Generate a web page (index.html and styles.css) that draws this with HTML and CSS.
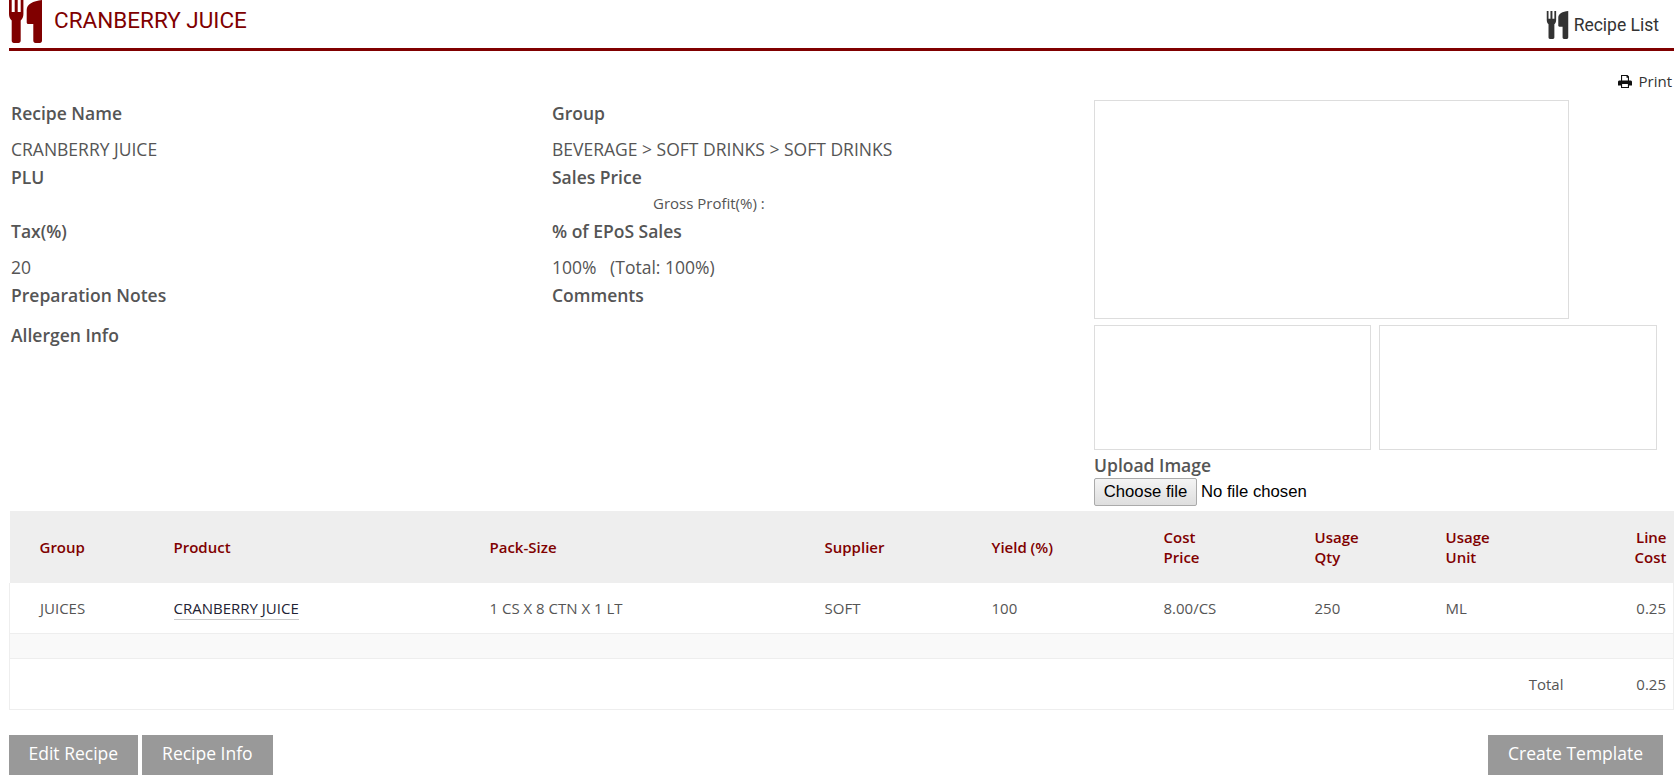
FILE: index.html
```html
<!DOCTYPE html>
<html lang="en">
<head>
<meta charset="utf-8">
<title>Cranberry Juice</title>
<link rel="stylesheet" href="styles.css">
</head>
<body>
<svg class="defs" aria-hidden="true"><symbol id="cutlery" viewBox="0 0 33 43"><path d="M0 0h2.700v12h3V0h3v12h3V0h2.700v14c0 3-1 5-2.700 6.500v20c0 1.500-.8 2.500-2.200 2.500H4.900c-1.400 0-2.200-1-2.200-2.500v-20C1 19 0 17 0 14z"/><path d="M33 0v40.500c0 1.500-.8 2.500-2.200 2.500h-4.300c-1.400 0-2.200-1-2.200-2.500V24h-4.800c-1.300 0-1.800-.7-1.800-1.800V10C17.700 4 24 1 33 0z"/></symbol></svg>
<header class="topbar">
  <div class="title">
    <svg class="cut-lg"><use href="#cutlery"/></svg>
    <h1>CRANBERRY JUICE</h1>
  </div>
  <a class="list-link"><svg class="cut-sm"><use href="#cutlery"/></svg>Recipe List</a>
</header>
<div class="print-row">
  <a class="print">
    <svg class="print-icon" viewBox="0 0 14 13"><path fill-rule="evenodd" d="M3 0h6.500L11 1.500V5.500H3zM4.100 1.100V5.500H9.900V2.700H8.500V1.100zM0 7C0 6 .7 5.500 1.500 5.500h11C13.300 5.500 14 6 14 7v3.500h-3V13H3v-2.500H0zM4.100 9v2.900h5.800V9z"/></svg>
    Print
  </a>
</div>
<section class="info">
  <div class="fields">
    <div class="field"><h4>Recipe Name</h4><p>CRANBERRY JUICE</p></div>
    <div class="field"><h4>Group</h4><p>BEVERAGE &gt; SOFT DRINKS &gt; SOFT DRINKS</p></div>
    <div class="field short"><h4>PLU</h4></div>
    <div class="field short"><h4>Sales Price</h4><small>Gross Profit(%) :</small></div>
    <div class="field"><h4>Tax(%)</h4><p>20</p></div>
    <div class="field"><h4>% of EPoS Sales</h4><p>100% &nbsp; (Total: 100%)</p></div>
    <div class="field notes"><h4>Preparation Notes</h4></div>
    <div class="field notes"><h4>Comments</h4></div>
    <div class="field"><h4>Allergen Info</h4></div>
  </div>
  <aside class="images">
    <div class="img-main"></div>
    <div class="thumbs"><div class="thumb"></div><div class="thumb"></div></div>
    <h4 class="upload-label">Upload Image</h4>
    <div class="upload"><button class="file-btn" type="button">Choose file</button><span>No file chosen</span></div>
  </aside>
</section>
<table class="lines">
  <thead>
    <tr>
      <th class="c1">Group</th><th class="c2">Product</th><th class="c3">Pack-Size</th><th class="c4">Supplier</th><th class="c5">Yield (%)</th><th class="c6">Cost<br>Price</th><th class="c7">Usage<br>Qty</th><th class="c8">Usage<br>Unit</th><th class="num">Line<br>Cost</th>
    </tr>
  </thead>
  <tbody>
    <tr class="row">
      <td>JUICES</td><td><a class="product">CRANBERRY JUICE</a></td><td>1 CS X 8 CTN X 1 LT</td><td>SOFT</td><td>100</td><td>8.00/CS</td><td>250</td><td>ML</td><td class="num">0.25</td>
    </tr>
    <tr class="spacer"><td colspan="9"></td></tr>
    <tr class="total">
      <td colspan="7"></td><td class="total-label">Total</td><td class="num">0.25</td>
    </tr>
  </tbody>
</table>
<footer class="actions">
  <div class="actions-left"><a class="btn">Edit Recipe</a><a class="btn btn-wide">Recipe Info</a></div>
  <a class="btn btn-create">Create Template</a>
</footer>
</body>
</html>
```
FILE: styles.css
```css
* { box-sizing: border-box; }
html, body { margin: 0; padding: 0; }
body { width: 1677px; height: 782px; overflow: hidden; padding: 0 3px 0 9px; font-family: "Open Sans", sans-serif; font-size: 17.5px; color: #555; background: #fff; }
.defs { display: none; }
.topbar { height: 51px; border-bottom: 3px solid #800000; display: flex; justify-content: space-between; align-items: flex-start; padding-right: 15px; }
.title { display: flex; align-items: flex-start; }
.cut-lg { width: 33px; height: 43px; fill: #800000; display: block; }
.title h1 { margin: 6px 0 0 12px; font: 400 22.5px/28px Roboto, sans-serif; color: #800000; }
.list-link { display: flex; align-items: center; margin-top: 11px; font: 400 17.5px/22px Roboto, sans-serif; color: #333; }
.cut-sm { width: 23px; height: 28px; fill: #333; margin-right: 5px; }
.print-row { display: flex; justify-content: flex-end; padding: 20px 2px 0 0; height: 48px; }
.print { display: flex; align-items: center; gap: 6px; height: 20px; font-size: 15px; color: #333; }
.print-icon { width: 14px; height: 13px; fill: #111; margin-right: 1px; }
.info { display: flex; height: 412px; }
.fields { width: 1085px; display: grid; grid-template-columns: 541px 544px; grid-template-rows: 64px 54px 64px 40px auto; align-content: start; padding-left: 2px; }
.field h4 { margin: 0; font-size: 17.5px; line-height: 28px; font-weight: 600; color: #555; }
.field p { margin: 11px 0 0; font-size: 17.5px; line-height: 22px; }
.field small { display: block; padding-left: 101px; font-size: 15px; line-height: 24px; }
.images { padding-top: 1px; width: 580px; }
.img-main { width: 475px; height: 219px; border: 1px solid #ddd; }
.thumbs { display: flex; gap: 8px; margin-top: 6px; }
.thumb { width: 277px; height: 125px; border: 1px solid #ddd; }
.thumb + .thumb { width: 278px; }
.upload-label { margin: 3px 0 1px; font-size: 17.5px; line-height: 24px; font-weight: 600; color: #555; }
.upload { display: flex; align-items: center; gap: 4px; font: 16.7px "Liberation Sans", sans-serif; color: #000; }
.file-btn { width: 103px; height: 28px; padding: 0; border: 1px solid #aaa; border-radius: 2px; background: linear-gradient(#f4f4f4, #dedede); font: inherit; color: #000; }
.lines { width: 1665px; border-collapse: collapse; table-layout: fixed; font-size: 15px; }
.lines th { height: 72px; background: #eee; color: #800000; font-weight: 600; line-height: 20px; text-align: left; padding: 0; }
.lines td { padding: 0; }
.lines th:first-child { padding-left: 30px; }
.lines td:first-child { padding-left: 30px; }
.c1 { width: 164px; } .c2 { width: 316px; } .c3 { width: 335px; } .c4 { width: 167px; } .c5 { width: 172px; } .c6 { width: 151px; } .c7 { width: 131px; } .c8 { width: 130px; }
.lines .num { text-align: right; padding-right: 7px; }
.row td { height: 50px; border-bottom: 1px solid #eee; }
.product { color: #223; border-bottom: 1px solid #ccc; padding-bottom: 1px; }
.spacer td { height: 25px; background: #f9f9f9; border-bottom: 1px solid #eee; }
.total td { height: 51px; border-bottom: 1px solid #eee; }
.row td:first-child, .total td:first-child, .spacer td { border-left: 1px solid #eee; }
.row td:last-child, .total td:last-child, .spacer td { border-right: 1px solid #eee; }
.lines .total-label { text-align: right; padding-right: 12px; }
.actions { display: flex; justify-content: space-between; margin-top: 25px; padding-right: 11px; }
.actions-left { display: flex; gap: 4px; }
.btn { display: block; height: 40px; padding: 0 19.500px; background: #999; color: #fff; font-size: 17.5px; line-height: 37px; }
.btn-wide { padding: 0 20.500px; }
.btn-create { padding: 0 20px; }
```
